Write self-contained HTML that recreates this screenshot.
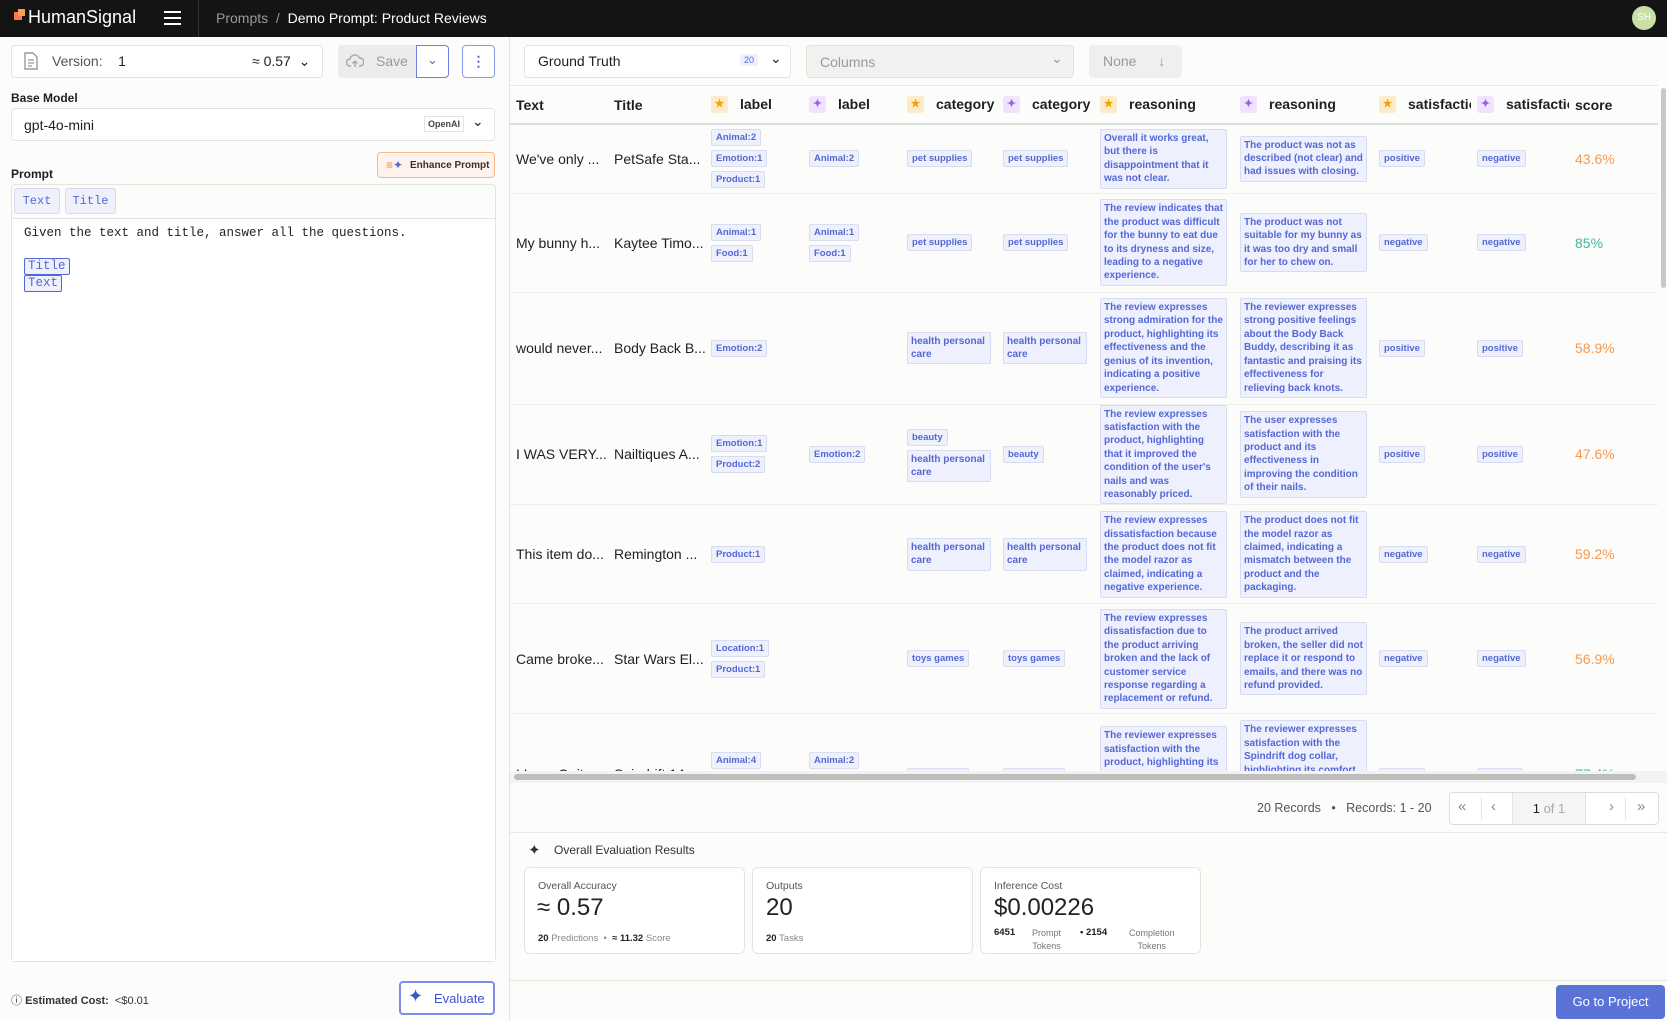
<!DOCTYPE html>
<html><head><meta charset="utf-8"><style>
*{box-sizing:border-box;margin:0;padding:0}
body{width:1667px;height:1021px;overflow:hidden;background:#fcfcfb;font-family:"Liberation Sans",sans-serif;color:#1f1f1f;position:relative}
.a{position:absolute}
.hdr{left:0;top:0;width:1667px;height:37px;background:#141414;color:#fff}
.box{border:1px solid #e3e3e0;border-radius:4px;background:#fff}
.chip{display:inline-block;background:#eef0fc;border:1px solid #d8dcf3;color:#5468d4;font-size:9.5px;padding:2px 4px;border-radius:2px;margin:2px 0;white-space:nowrap;font-weight:bold}
.rs{background:#eef0fd;border:1px solid #d8dcf3;color:#5468d4;font-size:10px;line-height:13.4px;padding:2px 3px;width:127px;border-radius:2px;font-weight:bold;white-space:normal}
table{border-collapse:collapse;table-layout:fixed}
td{vertical-align:middle;padding:0 6px;font-size:14px;border-bottom:1px solid #eeeeec;overflow:hidden;white-space:nowrap}
th{height:38px;text-align:left;font-size:14px;font-weight:bold;padding:0 6px;border-bottom:2px solid #ddd;white-space:nowrap;overflow:hidden;background:#fcfcfb;vertical-align:middle}
.ic{display:inline-block;width:17px;height:17px;border-radius:3px;vertical-align:middle;margin-right:12px;text-align:center;font-size:11px;line-height:17px}
.st{background:#fdeccc;color:#f4a300}.sp{background:#efe3fd;color:#9b5ce8}
.c{display:flex;flex-direction:column;align-items:flex-start}
.btn{border:1px solid #dcdcda;border-radius:4px;background:#fff}
.card{border:1px solid #e3e3e0;border-radius:6px;background:#fff}
</style></head><body>
<div class="a hdr">
 <div class="a" style="left:14px;top:12px;width:8px;height:8px;background:#ff7557"></div>
 <div class="a" style="left:18px;top:9px;width:7px;height:7px;background:#ff9d57"></div>
 <div class="a" style="left:28px;top:7px;font-size:18px;">HumanSignal</div>
 <div class="a" style="left:164px;top:11px;width:17px;height:2px;background:#fff;box-shadow:0 6px 0 #fff,0 12px 0 #fff"></div>
 <div class="a" style="left:198px;top:0;width:1px;height:37px;background:#333"></div>
 <div class="a" style="left:216px;top:10px;font-size:14px;color:#999">Prompts &nbsp;/ &nbsp;<span style="color:#fff">Demo Prompt: Product Reviews</span></div>
 <div class="a" style="left:1632px;top:6px;width:24px;height:24px;border-radius:12px;background:#c8e0a5;color:#fff;font-size:10px;text-align:center;line-height:24px">SH</div>
</div>
<div class="a" style="left:509px;top:37px;width:1px;height:984px;background:#e3e3e0"></div>
<div class="a box" style="left:11px;top:45px;width:312px;height:33px"></div>
<svg class="a" style="left:23px;top:52px" width="16" height="18" viewBox="0 0 16 18"><path d="M2 1h8l4 4v12H2z" fill="none" stroke="#999" stroke-width="1.4"/><path d="M5 8h6M5 11h6M5 14h4" stroke="#999" stroke-width="1.2"/></svg>
<div class="a" style="left:52px;top:53px;font-size:14px;color:#555">Version: &nbsp;&nbsp;&nbsp;<span style="color:#222">1</span></div>
<div class="a" style="left:252px;top:53px;font-size:14px">≈ 0.57 &nbsp;⌄</div>
<div class="a" style="left:338px;top:45px;width:78px;height:33px;background:#ececea;border-radius:4px 0 0 4px;color:#999;font-size:14px;padding:8px 0 0 38px">Save</div>
<svg class="a" style="left:346px;top:53px" width="18" height="16" viewBox="0 0 18 16"><path d="M5 13H4a3.5 3.5 0 0 1 0-7 5 5 0 0 1 9.5-1A3.5 3.5 0 0 1 14 13h-1M9 14V8M6.5 10.5 9 8l2.5 2.5" fill="none" stroke="#aaa" stroke-width="1.5"/></svg>
<div class="a" style="left:416px;top:45px;width:33px;height:33px;border:1.5px solid #6b7fe0;border-radius:0 4px 4px 0;background:#fff;color:#5468d4;text-align:center;font-size:13px;line-height:28px">⌄</div>
<div class="a" style="left:462px;top:45px;width:33px;height:33px;border:1.5px solid #8c9ae6;border-radius:4px;background:#fff;color:#5468d4;text-align:center;font-size:14px;line-height:30px;font-weight:bold">⋮</div>
<div class="a" style="left:11px;top:91px;font-size:12px;font-weight:bold">Base Model</div>
<div class="a box" style="left:11px;top:108px;width:484px;height:33px"></div>
<div class="a" style="left:24px;top:117px;font-size:14px">gpt-4o-mini</div>
<div class="a" style="left:424px;top:116px;font-size:9px;border:1px solid #e3e3e0;padding:2px 3px;font-weight:bold;color:#444">OpenAI</div>
<div class="a" style="left:472px;top:113px;font-size:14px">⌄</div>
<div class="a" style="left:377px;top:152px;width:118px;height:26px;border:1px solid #f9b98a;background:#fff3ec;border-radius:4px;font-size:10px;font-weight:bold;padding:7px 0 0 32px;color:#333">Enhance Prompt</div>
<div class="a" style="left:386px;top:158px;color:#f08a4b;font-size:12px">≡<span style="color:#5468d4">✦</span></div>
<div class="a" style="left:11px;top:167px;font-size:12px;font-weight:bold">Prompt</div>
<div class="a box" style="left:11px;top:184px;width:485px;height:778px;background:#fcfcfb"></div>
<div class="a" style="left:11px;top:218px;width:485px;height:1px;background:#e3e3e0"></div>
<div class="a" style="left:12px;top:219px;width:483px;height:742px;background:#fff"></div>
<div class="a" style="left:14px;top:188px;width:46px;height:26px;background:#eef0fc;border:1px solid #d8dcf3;border-radius:3px;font-family:'Liberation Mono',monospace;font-size:12px;color:#5468d4;text-align:center;line-height:24px">Text</div>
<div class="a" style="left:65px;top:188px;width:51px;height:26px;background:#eef0fc;border:1px solid #d8dcf3;border-radius:3px;font-family:'Liberation Mono',monospace;font-size:12px;color:#5468d4;text-align:center;line-height:24px">Title</div>
<div class="a" style="left:24px;top:226px;font-family:'Liberation Mono',monospace;font-size:12.5px;color:#222">Given the text and title, answer all the questions.</div>
<div class="a" style="left:24px;top:258px;border:1px solid #5468d4;border-radius:2px;background:#eef0fc;color:#5468d4;font-family:'Liberation Mono',monospace;font-size:12.5px;padding:0 3px;line-height:15px">Title</div>
<div class="a" style="left:24px;top:275px;border:1px solid #5468d4;border-radius:2px;background:#eef0fc;color:#5468d4;font-family:'Liberation Mono',monospace;font-size:12.5px;padding:0 3px;line-height:15px">Text</div>
<div class="a" style="left:11px;top:992px;font-size:11px;color:#333">ⓘ <b>Estimated Cost:</b> &nbsp;&lt;$0.01</div>
<div class="a" style="left:399px;top:981px;width:96px;height:34px;border:2px solid #7d8ee6;border-radius:4px;background:#fff;color:#3c53cf;font-size:13px;padding:8px 0 0 33px">Evaluate</div>
<div class="a" style="left:408px;top:986px;color:#3c53cf;font-size:18px">✦</div>
<div class="a box" style="left:524px;top:45px;width:267px;height:33px"></div>
<div class="a" style="left:538px;top:53px;font-size:14px">Ground Truth</div>
<div class="a" style="left:740px;top:54px;font-size:9px;background:#eef0fc;color:#5468d4;padding:1px 4px;border-radius:2px">20</div>
<div class="a" style="left:770px;top:50px;font-size:14px">⌄</div>
<div class="a" style="left:806px;top:45px;width:268px;height:33px;background:#f1f1ef;border:1px solid #e3e3e0;border-radius:4px;color:#999;font-size:14px;padding:8px 0 0 13px">Columns</div>
<div class="a" style="left:1051px;top:50px;font-size:14px;color:#999">⌄</div>
<div class="a" style="left:1089px;top:45px;width:93px;height:33px;background:#efefed;border-radius:4px;color:#999;font-size:14px;padding:8px 0 0 14px">None <span style="margin-left:18px">↓</span></div>
<div class="a" style="left:510px;top:85px;width:1148px;height:686px;overflow:hidden;border-top:1px solid #e6e6e4">
<table style="width:1160px">
<colgroup><col style="width:98px"><col style="width:97px"><col style="width:98px"><col style="width:98px"><col style="width:96px"><col style="width:97px"><col style="width:140px"><col style="width:139px"><col style="width:98px"><col style="width:98px"><col style="width:101px"></colgroup>
<tr><th>Text</th><th>Title</th><th><span class="ic st">★</span>label</th><th><span class="ic sp">✦</span>label</th><th><span class="ic st">★</span>category</th><th><span class="ic sp">✦</span>category</th><th><span class="ic st">★</span>reasoning</th><th><span class="ic sp">✦</span>reasoning</th><th><span class="ic st">★</span>satisfaction</th><th><span class="ic sp">✦</span>satisfaction</th><th>score</th></tr>
<tr style="height:69px"><td>We've only ...</td><td>PetSafe Sta...</td><td><div class="c"><span class="chip">Animal:2</span><span class="chip">Emotion:1</span><span class="chip">Product:1</span></div></td><td><span class="chip">Animal:2</span></td><td><span class="chip">pet supplies</span></td><td><span class="chip">pet supplies</span></td><td><div class="rs">Overall it works great, but there is disappointment that it was not clear.</div></td><td><div class="rs">The product was not as described (not clear) and had issues with closing.</div></td><td><span class="chip">positive</span></td><td><span class="chip">negative</span></td><td style="color:#f7994f">43.6%</td></tr>
<tr style="height:99px"><td>My bunny h...</td><td>Kaytee Timo...</td><td><div class="c"><span class="chip">Animal:1</span><span class="chip">Food:1</span></div></td><td><div class="c"><span class="chip">Animal:1</span><span class="chip">Food:1</span></div></td><td><span class="chip">pet supplies</span></td><td><span class="chip">pet supplies</span></td><td><div class="rs">The review indicates that the product was difficult for the bunny to eat due to its dryness and size, leading to a negative experience.</div></td><td><div class="rs">The product was not suitable for my bunny as it was too dry and small for her to chew on.</div></td><td><span class="chip">negative</span></td><td><span class="chip">negative</span></td><td style="color:#3cb8a0">85%</td></tr>
<tr style="height:112px"><td>would never...</td><td>Body Back B...</td><td><span class="chip">Emotion:2</span></td><td></td><td><div class="rs" style="width:84px">health personal care</div></td><td><div class="rs" style="width:84px">health personal care</div></td><td><div class="rs">The review expresses strong admiration for the product, highlighting its effectiveness and the genius of its invention, indicating a positive experience.</div></td><td><div class="rs">The reviewer expresses strong positive feelings about the Body Back Buddy, describing it as fantastic and praising its effectiveness for relieving back knots.</div></td><td><span class="chip">positive</span></td><td><span class="chip">positive</span></td><td style="color:#f7994f">58.9%</td></tr>
<tr style="height:99px"><td>I WAS VERY...</td><td>Nailtiques A...</td><td><div class="c"><span class="chip">Emotion:1</span><span class="chip">Product:2</span></div></td><td><span class="chip">Emotion:2</span></td><td><div class="c"><span class="chip">beauty</span><div class="rs" style="width:84px;margin-top:2px">health personal care</div></div></td><td><span class="chip">beauty</span></td><td><div class="rs">The review expresses satisfaction with the product, highlighting that it improved the condition of the user's nails and was reasonably priced.</div></td><td><div class="rs">The user expresses satisfaction with the product and its effectiveness in improving the condition of their nails.</div></td><td><span class="chip">positive</span></td><td><span class="chip">positive</span></td><td style="color:#f7994f">47.6%</td></tr>
<tr style="height:99px"><td>This item do...</td><td>Remington ...</td><td><span class="chip">Product:1</span></td><td></td><td><div class="rs" style="width:84px">health personal care</div></td><td><div class="rs" style="width:84px">health personal care</div></td><td><div class="rs">The review expresses dissatisfaction because the product does not fit the model razor as claimed, indicating a negative experience.</div></td><td><div class="rs">The product does not fit the model razor as claimed, indicating a mismatch between the product and the packaging.</div></td><td><span class="chip">negative</span></td><td><span class="chip">negative</span></td><td style="color:#f7994f">59.2%</td></tr>
<tr style="height:110px"><td>Came broke...</td><td>Star Wars El...</td><td><div class="c"><span class="chip">Location:1</span><span class="chip">Product:1</span></div></td><td></td><td><span class="chip">toys games</span></td><td><span class="chip">toys games</span></td><td><div class="rs">The review expresses dissatisfaction due to the product arriving broken and the lack of customer service response regarding a replacement or refund.</div></td><td><div class="rs">The product arrived broken, the seller did not replace it or respond to emails, and there was no refund provided.</div></td><td><span class="chip">negative</span></td><td><span class="chip">negative</span></td><td style="color:#f7994f">56.9%</td></tr>
<tr style="height:110px"><td style="vertical-align:top;padding-top:52px">I Love Quit...</td><td style="vertical-align:top;padding-top:52px">Spindrift 14...</td><td style="vertical-align:top;padding-top:36px"><div class="c"><span class="chip">Animal:4</span><span class="chip">Product:2</span></div></td><td style="vertical-align:top;padding-top:36px"><div class="c"><span class="chip">Animal:2</span><span class="chip">Product:1</span></div></td><td style="vertical-align:top;padding-top:52px"><span class="chip">toys games</span></td><td style="vertical-align:top;padding-top:52px"><span class="chip">toys games</span></td><td style="vertical-align:top;padding-top:12px"><div class="rs">The reviewer expresses satisfaction with the product, highlighting its comfort and durability.</div></td><td style="vertical-align:top;padding-top:6px"><div class="rs">The reviewer expresses satisfaction with the Spindrift dog collar, highlighting its comfort and durability.</div></td><td style="vertical-align:top;padding-top:52px"><span class="chip">positive</span></td><td style="vertical-align:top;padding-top:52px"><span class="chip">positive</span></td><td style="vertical-align:top;padding-top:52px;color:#3cb8a0">77.4%</td></tr>
</table>
</div>
<div class="a" style="left:1661px;top:88px;width:5px;height:200px;background:#c9c9c7;border-radius:3px"></div>
<div class="a" style="left:510px;top:771px;width:1157px;height:12px;background:#f3f3f1"></div>
<div class="a" style="left:514px;top:774px;width:1122px;height:6px;background:#bdbdbb;border-radius:3px"></div>
<div class="a" style="left:510px;top:832px;width:1157px;height:1px;background:#e8e8e6"></div>
<div class="a" style="left:1257px;top:801px;font-size:12.5px;color:#555">20 Records &nbsp;&nbsp;• &nbsp;&nbsp;Records: 1 - 20</div>
<div class="a btn" style="left:1449px;top:792px;width:210px;height:33px"></div>
<div class="a" style="left:1458px;top:798px;font-size:15px;color:#888">«</div>
<div class="a" style="left:1491px;top:798px;font-size:15px;color:#888">‹</div>
<div class="a" style="left:1481px;top:797px;width:1px;height:23px;background:#e3e3e0"></div>
<div class="a" style="left:1512px;top:793px;width:74px;height:31px;background:#f5f5f3;border-left:1px solid #e3e3e0;border-right:1px solid #e3e3e0;font-size:13px;text-align:center;line-height:31px">1 <span style="color:#aaa">of 1</span></div>
<div class="a" style="left:1609px;top:798px;font-size:15px;color:#888">›</div>
<div class="a" style="left:1625px;top:797px;width:1px;height:23px;background:#e3e3e0"></div>
<div class="a" style="left:1637px;top:798px;font-size:15px;color:#888">»</div>
<div class="a" style="left:528px;top:841px;font-size:15px;color:#333">✦</div>
<div class="a" style="left:554px;top:843px;font-size:12px;color:#333">Overall Evaluation Results</div>
<div class="a card" style="left:524px;top:867px;width:221px;height:87px"></div>
<div class="a" style="left:538px;top:880px;font-size:10.5px;color:#555">Overall Accuracy</div>
<div class="a" style="left:537px;top:894px;font-size:24px;color:#222">≈ 0.57</div>
<div class="a" style="left:538px;top:933px;font-size:9.5px;color:#888"><b style="color:#222">20</b> Predictions &nbsp;• &nbsp;<b style="color:#222">≈ 11.32</b> Score</div>
<div class="a card" style="left:752px;top:867px;width:221px;height:87px"></div>
<div class="a" style="left:766px;top:880px;font-size:10.5px;color:#555">Outputs</div>
<div class="a" style="left:766px;top:894px;font-size:24px;color:#222">20</div>
<div class="a" style="left:766px;top:933px;font-size:9.5px;color:#888"><b style="color:#222">20</b> Tasks</div>
<div class="a card" style="left:980px;top:867px;width:221px;height:87px"></div>
<div class="a" style="left:994px;top:880px;font-size:10.5px;color:#555">Inference Cost</div>
<div class="a" style="left:994px;top:894px;font-size:24px;color:#222">$0.00226</div>
<div class="a" style="left:994px;top:927px;font-size:9.5px;font-weight:bold">6451</div>
<div class="a" style="left:1032px;top:927px;font-size:9px;color:#777;text-align:center;line-height:13px">Prompt<br>Tokens</div>
<div class="a" style="left:1080px;top:927px;font-size:9.5px;font-weight:bold">• 2154</div>
<div class="a" style="left:1129px;top:927px;font-size:9px;color:#777;text-align:center;line-height:13px">Completion<br>Tokens</div>
<div class="a" style="left:510px;top:980px;width:1157px;height:1px;background:#e3e3e0"></div>
<div class="a" style="left:1556px;top:985px;width:109px;height:34px;background:#5b72d6;border-radius:4px;color:#fff;font-size:13px;text-align:center;line-height:34px">Go to Project</div>
</body></html>
